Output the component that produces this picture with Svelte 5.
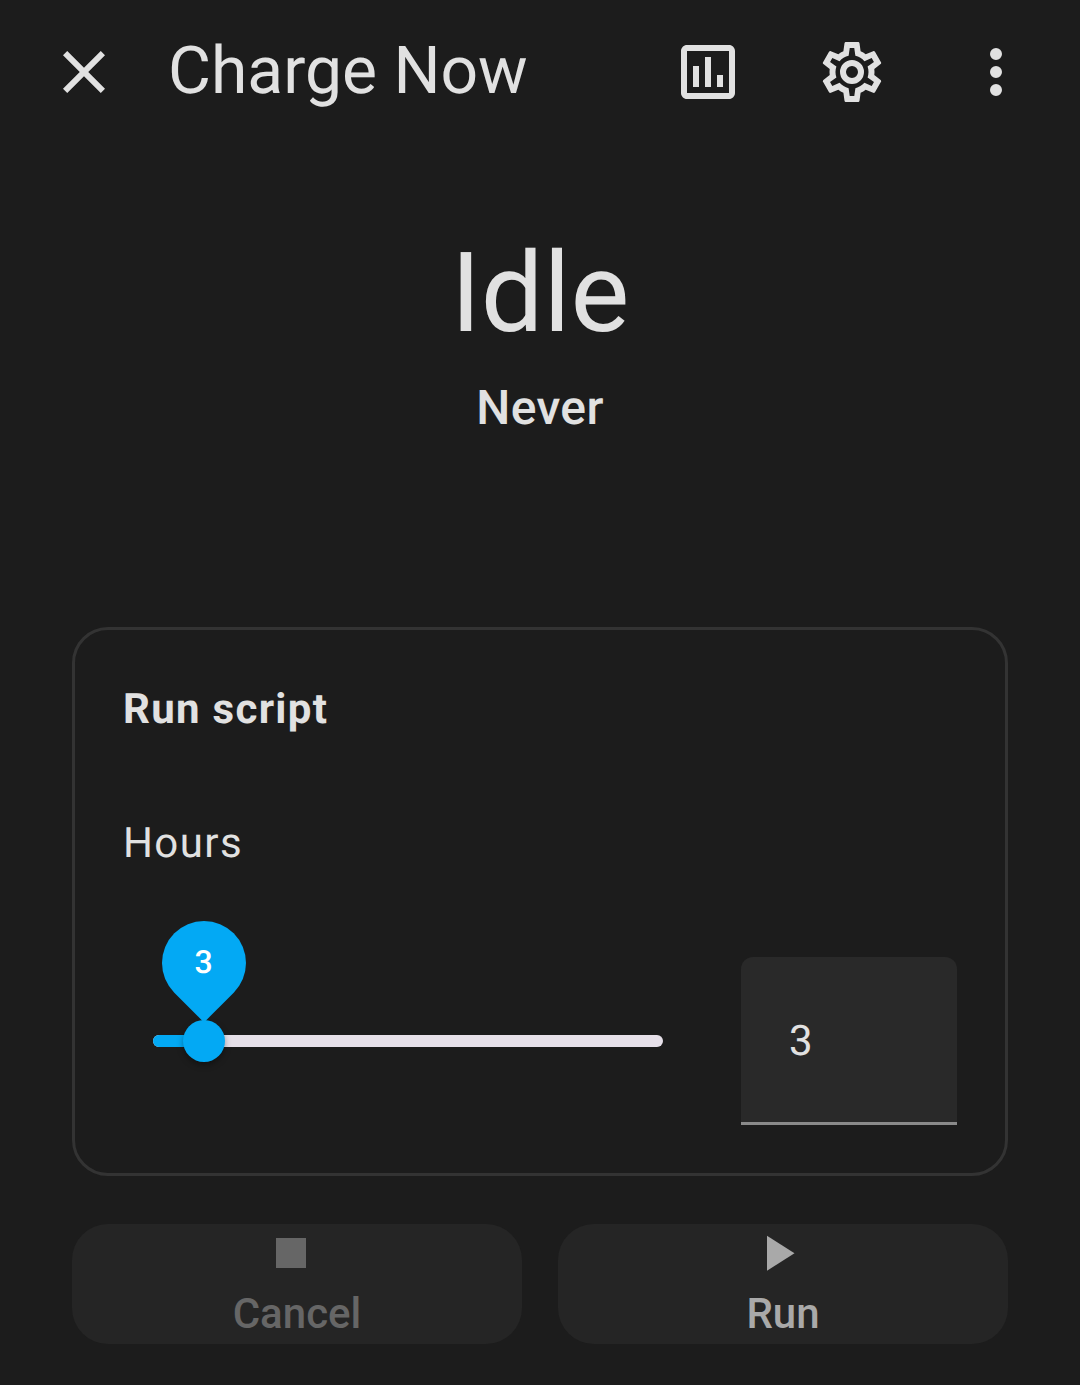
<script>
  let hours = $state(3);
</script>

<div class="page">
  <header class="toolbar">
    <button class="icon-btn" aria-label="Close">
      <svg viewBox="0 0 24 24"><path d="M19,6.41L17.59,5L12,10.59L6.41,5L5,6.41L10.59,12L5,17.59L6.41,19L12,13.41L17.59,19L19,17.59L13.41,12L19,6.41Z" /></svg>
    </button>
    <h1 class="title">Charge Now</h1>
    <button class="icon-btn" aria-label="History">
      <svg viewBox="0 0 24 24"><path d="M9 17H7V10H9V17M13 17H11V7H13V17M17 17H15V13H17V17M19 19H5V5H19V19.1M19 3H5C3.9 3 3 3.9 3 5V19C3 20.1 3.9 21 5 21H19C20.1 21 21 20.1 21 19V5C21 3.9 20.1 3 19 3Z" /></svg>
    </button>
    <button class="icon-btn" aria-label="Settings">
      <svg viewBox="0 0 24 24"><path d="M12,8A4,4 0 0,1 16,12A4,4 0 0,1 12,16A4,4 0 0,1 8,12A4,4 0 0,1 12,8M12,10A2,2 0 0,0 10,12A2,2 0 0,0 12,14A2,2 0 0,0 14,12A2,2 0 0,0 12,10M10,22C9.75,22 9.54,21.82 9.5,21.58L9.13,18.93C8.5,18.68 7.96,18.34 7.44,17.94L4.95,18.95C4.73,19.03 4.46,18.95 4.34,18.73L2.34,15.27C2.21,15.05 2.27,14.78 2.46,14.63L4.57,12.97L4.5,12L4.57,11L2.46,9.37C2.27,9.22 2.21,8.95 2.34,8.73L4.34,5.27C4.46,5.05 4.73,4.96 4.95,5.05L7.44,6.05C7.96,5.66 8.5,5.32 9.13,5.07L9.5,2.42C9.54,2.18 9.75,2 10,2H14C14.25,2 14.46,2.18 14.5,2.42L14.87,5.07C15.5,5.32 16.04,5.66 16.56,6.05L19.05,5.05C19.27,4.96 19.54,5.05 19.66,5.27L21.66,8.73C21.79,8.95 21.73,9.22 21.54,9.37L19.43,11L19.5,12L19.43,13L21.54,14.63C21.73,14.78 21.79,15.05 21.66,15.27L19.66,18.73C19.54,18.95 19.27,19.04 19.05,18.95L16.56,17.95C16.04,18.34 15.5,18.68 14.87,18.93L14.5,21.58C14.46,21.82 14.25,22 14,22H10M11.25,4L10.88,6.61C9.68,6.86 8.62,7.5 7.85,8.39L5.44,7.35L4.69,8.65L6.8,10.2C6.4,11.37 6.4,12.64 6.8,13.8L4.68,15.36L5.43,16.66L7.86,15.62C8.63,16.5 9.68,17.14 10.87,17.38L11.24,20H12.76L13.13,17.39C14.32,17.14 15.37,16.5 16.14,15.62L18.57,16.66L19.32,15.36L17.2,13.81C17.6,12.64 17.6,11.37 17.2,10.2L19.31,8.65L18.56,7.35L16.15,8.39C15.38,7.5 14.32,6.86 13.12,6.62L12.75,4H11.25Z" /></svg>
    </button>
    <button class="icon-btn" aria-label="More">
      <svg viewBox="0 0 24 24"><path d="M12,16A2,2 0 0,1 14,18A2,2 0 0,1 12,20A2,2 0 0,1 10,18A2,2 0 0,1 12,16M12,10A2,2 0 0,1 14,12A2,2 0 0,1 12,14A2,2 0 0,1 10,12A2,2 0 0,1 12,10M12,4A2,2 0 0,1 14,6A2,2 0 0,1 12,8A2,2 0 0,1 10,6A2,2 0 0,1 12,4Z" /></svg>
    </button>
  </header>

  <section class="state">
    <div class="state-value">Idle</div>
    <div class="state-sub">Never</div>
  </section>

  <section class="card">
    <h2 class="card-title">Run script</h2>
    <div class="field-label">Hours</div>
    <div class="field-row">
      <div class="slider">
        <div class="track"></div>
        <div class="track-fill"></div>
        <div class="thumb"></div>
        <div class="pin"><span>{hours}</span></div>
      </div>
      <div class="number-box">{hours}</div>
    </div>
  </section>

  <div class="actions">
    <button class="action disabled">
      <svg viewBox="0 0 24 24"><path d="M18,18H6V6H18V18Z" /></svg>
      <span>Cancel</span>
    </button>
    <button class="action">
      <svg viewBox="0 0 24 24"><path d="M8,5.14V19.14L19,12.14L8,5.14Z" /></svg>
      <span>Run</span>
    </button>
  </div>
</div>

<style>
  :global(body) {
    background: #1c1c1c;
  }

  .page {
    height: 1385px;
    box-sizing: border-box;
    background: #1c1c1c;
    color: #e1e1e1;
    font-family: Roboto, sans-serif;
    text-rendering: geometricPrecision;
    overflow: hidden;
  }

  .toolbar {
    display: flex;
    align-items: center;
    height: 144px;
    padding: 0 12px;
  }

  .icon-btn {
    width: 144px;
    height: 144px;
    padding: 36px;
    border: 0;
    background: none;
    flex-shrink: 0;
  }

  .icon-btn svg {
    display: block;
    width: 72px;
    height: 72px;
    fill: #e1e1e1;
  }

  .title {
    flex: 1;
    margin: 0 0 0 12px;
    font-size: 66px;
    font-weight: 400;
    line-height: 1;
  }

  .state {
    display: flex;
    flex-direction: column;
    align-items: center;
    padding-top: 84px;
    height: 483px;
    box-sizing: border-box;
  }

  .state-value {
    font-size: 111px;
    line-height: 132px;
  }

  .state-sub {
    font-size: 48px;
    font-weight: 500;
    line-height: 60px;
    letter-spacing: 0.4px;
    margin-top: 18px;
  }

  .card {
    box-sizing: border-box;
    height: 549px;
    margin: 0 72px;
    padding: 53px 48px 0;
    border: 3px solid #333333;
    border-radius: 36px;
  }

  .card-title {
    margin: 0;
    font-size: 42px;
    font-weight: 700;
    line-height: 54px;
    letter-spacing: 1.3px;
  }

  .field-label {
    margin-top: 80px;
    font-size: 42px;
    line-height: 54px;
    letter-spacing: 1.4px;
  }

  .field-row {
    display: flex;
    justify-content: space-between;
    align-items: flex-start;
    margin-top: 86px;
  }

  .slider {
    position: relative;
    width: 510px;
    height: 168px;
    margin-left: 30px;
  }

  .track {
    position: absolute;
    left: 0;
    right: 0;
    top: 78px;
    height: 12px;
    border-radius: 6px;
    background: #e6e0e9;
  }

  .track-fill {
    position: absolute;
    left: 0;
    width: 51px;
    top: 78px;
    height: 12px;
    border-radius: 6px 0 0 6px;
    background: #03a9f4;
  }

  .thumb {
    position: absolute;
    left: 30px;
    top: 63px;
    width: 42px;
    height: 42px;
    border-radius: 50%;
    background: #03a9f4;
    box-shadow: 0 3px 6px rgba(0, 0, 0, 0.35);
  }

  .pin {
    position: absolute;
    left: 9px;
    top: -36px;
    width: 84px;
    height: 84px;
    border-radius: 50% 50% 0 50%;
    background: #03a9f4;
    transform: rotate(45deg);
    display: flex;
    align-items: center;
    justify-content: center;
  }

  .pin span {
    transform: rotate(-45deg) translate(-0.5px, -1px);
    color: #fff;
    font-size: 32px;
    font-weight: 500;
  }

  .number-box {
    box-sizing: border-box;
    width: 216px;
    height: 168px;
    padding-left: 48px;
    background: #292929;
    border-bottom: 3px solid #8a8a8a;
    border-radius: 12px 12px 0 0;
    font-size: 42px;
    line-height: 169px;
  }

  .actions {
    display: flex;
    gap: 36px;
    margin: 48px 72px 0;
  }

  .action {
    flex: 1;
    height: 120px;
    padding: 0;
    border: 0;
    border-radius: 36px;
    background: #252525;
    color: #a9a9a9;
    font-family: inherit;
    font-size: 42px;
    font-weight: 500;
    display: flex;
    flex-direction: column;
    align-items: center;
  }

  .action svg {
    display: block;
    width: 60px;
    height: 60px;
    margin: -1px 0 1px -12px;
    fill: currentColor;
  }

  .action span {
    line-height: 60px;
  }

  .action.disabled {
    color: #666666;
  }
</style>
